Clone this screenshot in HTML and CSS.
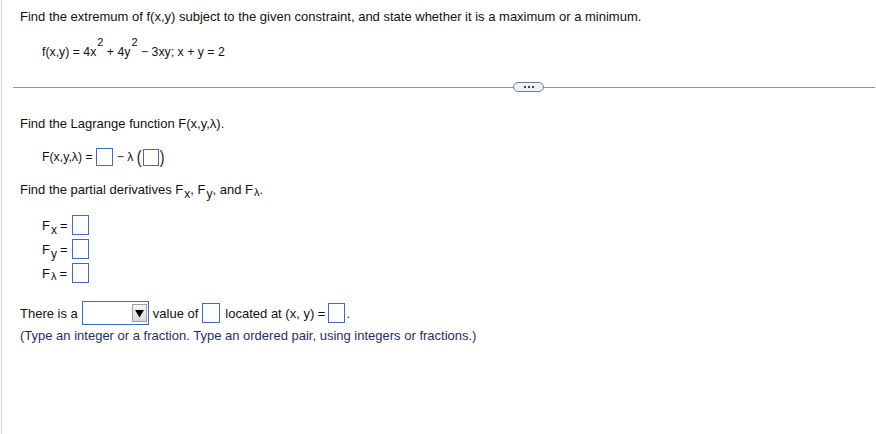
FILE: index.html
```html
<!DOCTYPE html>
<html>
<head>
<meta charset="utf-8">
<link rel="stylesheet" href="styles.css">
</head>
<body>
<div class="page">
  <p class="q1">Find the extremum of f(x,y) subject to the given constraint, and state whether it is a maximum or a minimum.</p>
  <p class="formula">f(x,y) = 4x<sup>2</sup> + 4y<sup>2</sup> − 3xy; x + y = 2</p>
  <div class="divider"><span class="rule r1"></span><span class="pill"><i></i><i></i><i></i></span><span class="rule r2"></span></div>
  <p class="q2">Find the Lagrange function F(x,y,λ).</p>
  <div class="lag">
    <span class="math">F(x,y,λ) =</span><span class="box b1"></span><span class="minus math">− λ</span><span class="paren">(</span><span class="box b2"></span><span class="paren">)</span>
  </div>
  <p class="q3">Find the partial derivatives F<sub>x</sub>, F<sub>y</sub>, and F<sub class="lam">λ</sub>.</p>
  <div class="partials">
    <div class="prow"><span class="lbl">F<sub>x</sub></span><span class="eq">=</span><span class="box pb"></span></div>
    <div class="prow"><span class="lbl">F<sub>y</sub></span><span class="eq">=</span><span class="box pb"></span></div>
    <div class="prow"><span class="lbl">F<sub class="lam">λ</sub></span><span class="eq">=</span><span class="box pb"></span></div>
  </div>
  <div class="ans">
    <span>There is a</span>
    <span class="select"><span class="arrow"><svg width="9" height="9" viewBox="0 0 9 9"><path d="M0 1 H9 L4.5 8.5 Z" fill="#000"/></svg></span></span>
    <span>value of</span><span class="box ab"></span><span>located at (x, y) =</span><span class="box ab2"></span><span>.</span>
  </div>
  <p class="hint">(Type an integer or a fraction. Type an ordered pair, using integers or fractions.)</p>
</div>
</body>
</html>
```
FILE: styles.css
```css
html, body {
  margin: 0;
  padding: 0;
  background: #fff;
}
body {
  font-family: "Liberation Sans", Arial, sans-serif;
  font-size: 13px;
  color: #111;
}
.page {
  width: 874px;
  height: 434px;
  margin-left: 1px;
  border-left: 1px solid #cfd3db;
  box-sizing: border-box;
  padding-left: 18px;
  padding-top: 9px;
}
p { margin: 0; line-height: 16px; }
.formula {
  margin-top: 19px;
  padding-left: 22px;
  font-size: 12.3px;
}
.math { font-size: 12.3px; }
sup {
  font-size: 11px;
  position: relative;
  top: -5px;
  line-height: 0;
  margin-left: 1px;
}
.divider {
  display: flex;
  align-items: center;
  margin-left: -7px;
  margin-top: 22px;
  height: 10px;
}
.rule { height: 1px; background: #8c94a3; }
.r1 { width: 500px; }
.r2 { flex: 1; }
.pill {
  width: 29px;
  height: 8px;
  border: 1px solid #6f7d92;
  border-radius: 5px;
  background: #eef1f6;
  display: flex;
  justify-content: center;
  align-items: center;
  gap: 2px;
}
.pill i { width: 2px; height: 2px; background: #3b465a; display: block; }
.q2 { margin-top: 24px; }
.lag {
  display: flex;
  align-items: center;
  padding-left: 22px;
  margin-top: 16px;
  height: 18px;
}
.box {
  display: inline-block;
  border: 1px solid #3d6cc6;
  background: #fff;
  box-sizing: border-box;
}
.b1 { width: 17px; height: 18px; margin-left: 3px; }
.minus { margin-left: 4px; margin-right: 3px; }
.paren { font-size: 19px; line-height: 18px; transform: scaleX(0.75); color: #222; }
.b2 { width: 16px; height: 17px; }
.q3 { margin-top: 16px; }
sub {
  font-size: 12px;
  position: relative;
  top: 4px;
  line-height: 0;
  vertical-align: baseline;
  margin-left: 1px;
}
sub.lam { font-size: 11px; top: 2px; }
.partials {
  padding-left: 22px;
  margin-top: 17px;
  display: flex;
  flex-direction: column;
  gap: 4px;
}
.prow { display: flex; align-items: center; height: 20px; }
.lbl { flex: none; }
.eq { margin-left: 3px; margin-right: 4px; }
.pb { width: 17px; height: 20px; }
.prow:nth-child(3) .pb { margin-left: 1px; }
.ans {
  display: flex;
  align-items: center;
  margin-top: 18px;
  height: 24px;
}
.select {
  width: 67px;
  height: 24px;
  border: 1px solid #3d6cc6;
  box-sizing: border-box;
  margin-left: 4px;
  margin-right: 4px;
  display: flex;
  justify-content: flex-end;
  align-items: center;
  padding-right: 1px;
}
.arrow {
  width: 15px;
  height: 18px;
  border: 1px solid #9aa0a8;
  box-sizing: border-box;
  background: linear-gradient(#f6f6f6, #d9d9d9);
  display: flex;
  align-items: center;
  justify-content: center;
}
.ab { width: 18px; height: 20px; margin: 0 5px 0 4px; }
.ab2 { width: 17px; height: 20px; margin-left: 3px; margin-right: 1px; }
.hint { margin-top: 3px; color: #1f2f66; }
```
